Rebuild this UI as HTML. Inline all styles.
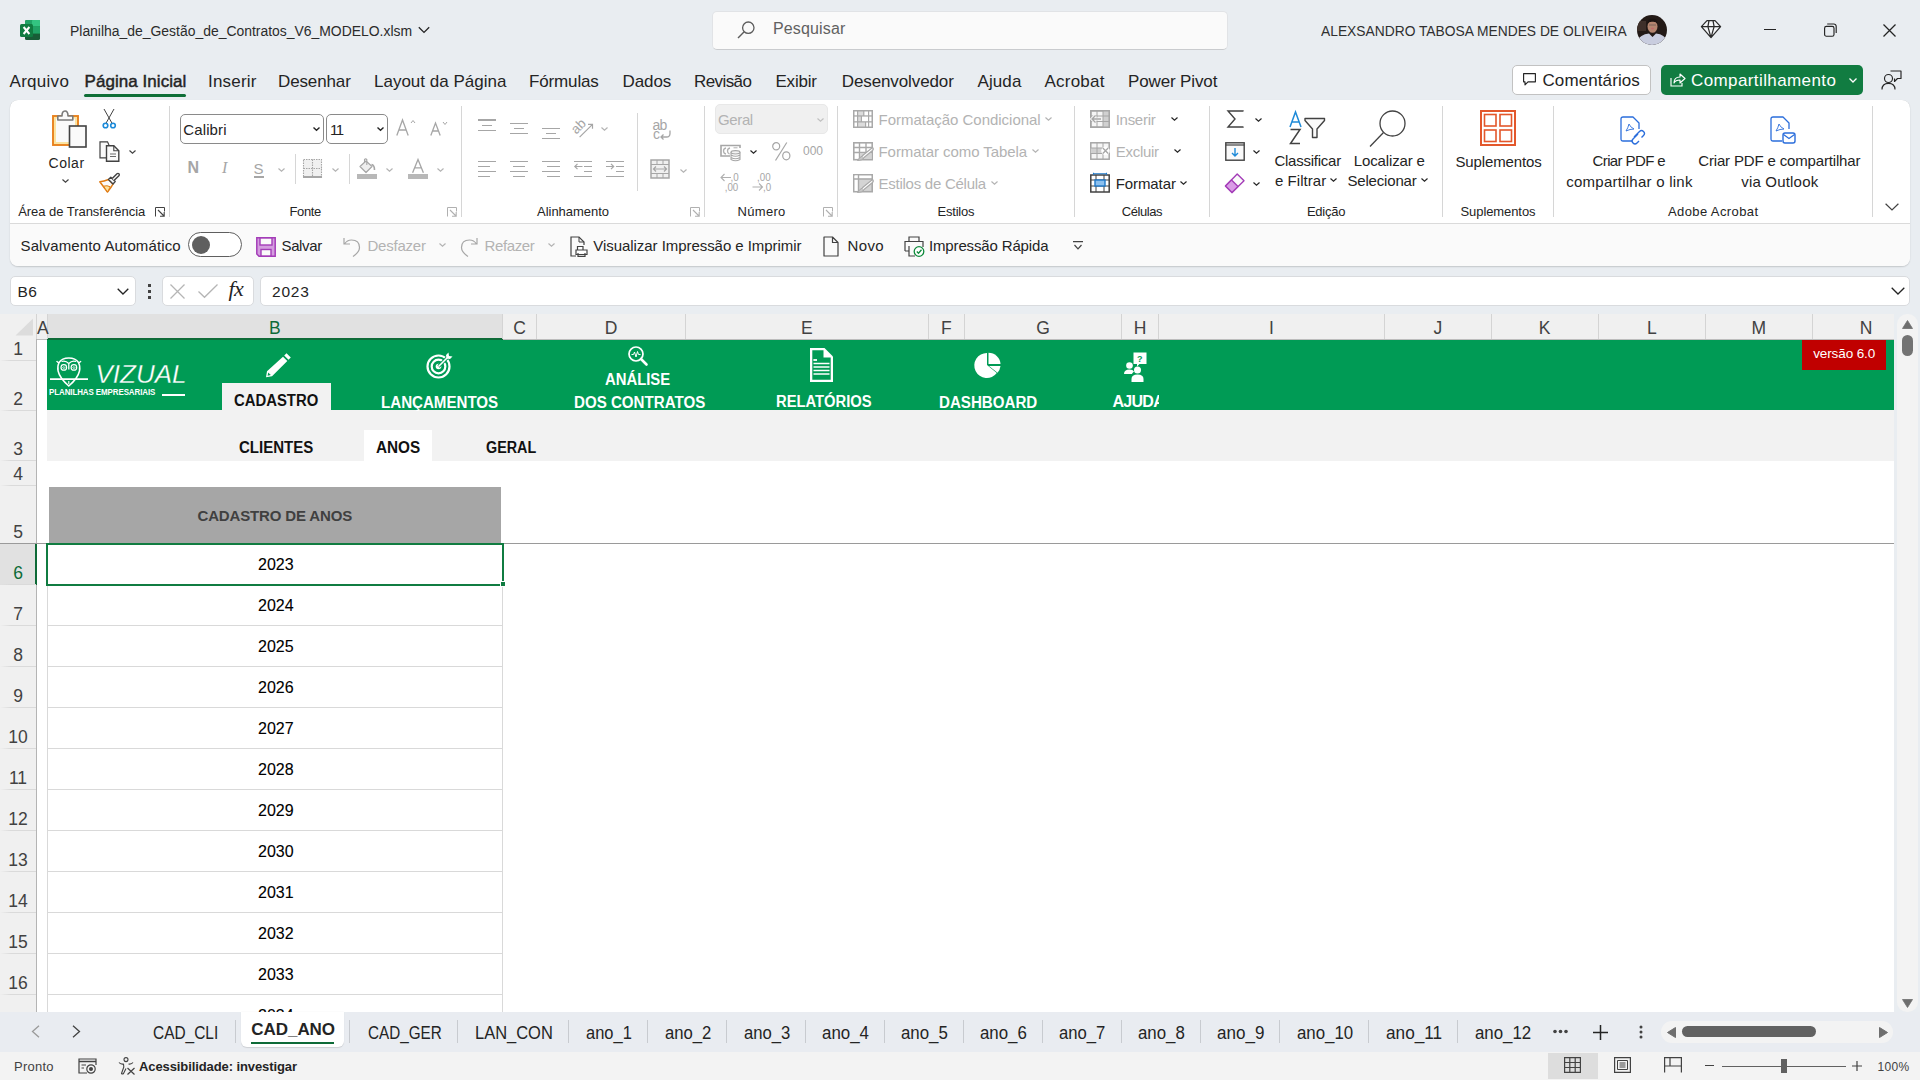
<!DOCTYPE html>
<html><head><meta charset="utf-8">
<style>
*{box-sizing:border-box;margin:0;padding:0}
html,body{width:1920px;height:1080px;overflow:hidden;background:#e9edf1;font-family:"Liberation Sans",sans-serif;color:#242424;position:relative}
.a{position:absolute}
.t{position:absolute;white-space:nowrap;line-height:1}
svg{position:absolute;overflow:visible}
.ic{fill:none;stroke:#424242;stroke-width:1}

</style></head><body>

<svg style="left:20px;top:20px" width="20" height="20" viewBox="0 0 20 20">
  <rect x="5" y="0" width="15" height="20" rx="1.5" fill="#185c37"/>
  <rect x="5" y="0" width="15" height="7" rx="1.5" fill="#21a366"/>
  <rect x="12" y="0" width="8" height="7" rx="1" fill="#33c481"/>
  <rect x="5" y="6.5" width="15" height="7" fill="#107c41"/>
  <rect x="12" y="6.5" width="8" height="7" fill="#21a366"/>
  <rect x="0" y="4" width="13" height="13" rx="1.5" fill="#107c41"/>
  <path d="M3.6 7 L9.4 14 M9.4 7 L3.6 14" stroke="#fff" stroke-width="2"/>
</svg>
<div class="t" id="t0" style="left:70.00px;top:22.96px;font-size:15.4px;color:#2b2b2b;transform:scaleX(0.9047);transform-origin:0 0;">Planilha_de_Gestão_de_Contratos_V6_MODELO.xlsm</div>
<svg style="left:418px;top:26px" width="12" height="8" viewBox="0 0 12 8"><path d="M0.8 1.2 L6 6.4 L11.2 1.2" fill="none" stroke="#242424" stroke-width="1.3"/></svg>
<div class="a" style="left:712px;top:11px;width:516px;height:39px;background:#fafafa;border:1px solid #e1e3e6;border-bottom-color:#c9cbce;border-radius:5px"></div>
<svg style="left:737px;top:21px" width="18" height="18" viewBox="0 0 18 18"><circle cx="11.3" cy="6.7" r="5.7" fill="none" stroke="#5c5c5c" stroke-width="1.3"/><path d="M7.2 10.8 L1 17" stroke="#5c5c5c" stroke-width="1.4"/></svg>
<div class="t" id="t1" style="left:773.00px;top:21.46px;font-size:16px;color:#616161;letter-spacing:0.140px;">Pesquisar</div>
<div class="t" id="t2" style="left:1321.00px;top:22.76px;font-size:15.4px;color:#303030;transform:scaleX(0.8970);transform-origin:0 0;">ALEXSANDRO TABOSA MENDES DE OLIVEIRA</div>
<svg style="left:1637px;top:15px" width="30" height="30" viewBox="0 0 30 30"><defs><clipPath id="avc"><circle cx="15" cy="15" r="15"/></clipPath></defs><g clip-path="url(#avc)"><rect width="30" height="30" fill="#231a17"/><rect x="0" y="6" width="9" height="10" fill="#3e302a"/><ellipse cx="15.5" cy="11.5" rx="5" ry="6.3" fill="#b4856f"/><path d="M10.5 9 Q10.5 3.5 15.5 3.8 Q20.5 3.5 20.5 9 Q19 6.5 15.5 6.8 Q12 6.5 10.5 9 Z" fill="#1b1412"/><path d="M12 10 H19" stroke="#6d5a55" stroke-width="0.8"/><ellipse cx="15.5" cy="13.6" rx="1.6" ry="0.8" fill="#c2686a"/><path d="M0 26 Q3 19.5 12 18.5 L15.5 22 L19 18.5 Q28 19.5 30 26 V30 H0 Z" fill="#c9cddf"/></g></svg>
<svg style="left:1701px;top:20px" width="20" height="19" viewBox="0 0 20 19"><path d="M6 0.6 H14 L19.6 6.7 L10 17.6 L0.4 6.7 Z" fill="#f4f6f8"/><path d="M6 0.6 H14 L19.6 6.7 L10 17.6 L0.4 6.7 Z M0.4 6.7 H19.6 M8 0.6 L6.9 6.7 L10 17.6 L13.1 6.7 L12 0.6" fill="none" stroke="#2b2b2b" stroke-width="1.25" stroke-linejoin="round"/></svg>
<div class="a" style="left:1764px;top:29px;width:12px;height:1.2px;background:#242424"></div>
<svg style="left:1824px;top:23px" width="13" height="14" viewBox="0 0 13 14"><rect x="0.6" y="3.4" width="9.4" height="9.8" rx="1.8" fill="none" stroke="#242424" stroke-width="1.15"/><path d="M3.2 1 H9.8 a2.4 2.4 0 0 1 2.4 2.4 V10" fill="none" stroke="#242424" stroke-width="1.15"/></svg>
<svg style="left:1883px;top:24px" width="13" height="13" viewBox="0 0 13 13"><path d="M0.5 0.5 L12.5 12.5 M12.5 0.5 L0.5 12.5" stroke="#242424" stroke-width="1.25"/></svg>

<div class="t" id="t3" style="left:9.50px;top:72.61px;font-size:17px;color:#242424;letter-spacing:0.287px;">Arquivo</div>
<div class="t" id="t4" style="left:84.50px;top:72.61px;font-size:17px;color:#242424;letter-spacing:0.057px;-webkit-text-stroke:0.45px #242424;">Página Inicial</div>
<div class="t" id="t5" style="left:208.00px;top:72.61px;font-size:17px;color:#242424;letter-spacing:0.188px;">Inserir</div>
<div class="t" id="t6" style="left:278.00px;top:72.61px;font-size:17px;color:#242424;letter-spacing:-0.123px;">Desenhar</div>
<div class="t" id="t7" style="left:374.00px;top:72.61px;font-size:17px;color:#242424;letter-spacing:0.001px;">Layout da Página</div>
<div class="t" id="t8" style="left:529.00px;top:72.61px;font-size:17px;color:#242424;letter-spacing:-0.143px;">Fórmulas</div>
<div class="t" id="t9" style="left:622.50px;top:72.61px;font-size:17px;color:#242424;letter-spacing:-0.070px;">Dados</div>
<div class="t" id="t10" style="left:694.00px;top:72.61px;font-size:17px;color:#242424;letter-spacing:-0.594px;">Revisão</div>
<div class="t" id="t11" style="left:775.50px;top:72.61px;font-size:17px;color:#242424;letter-spacing:-0.231px;">Exibir</div>
<div class="t" id="t12" style="left:841.75px;top:72.61px;font-size:17px;color:#242424;letter-spacing:-0.108px;">Desenvolvedor</div>
<div class="t" id="t13" style="left:977.50px;top:72.61px;font-size:17px;color:#242424;letter-spacing:0.094px;">Ajuda</div>
<div class="t" id="t14" style="left:1044.50px;top:72.61px;font-size:17px;color:#242424;letter-spacing:0.211px;">Acrobat</div>
<div class="t" id="t15" style="left:1128.00px;top:72.61px;font-size:17px;color:#242424;letter-spacing:-0.134px;">Power Pivot</div>
<div class="a" style="left:84px;top:94px;width:102px;height:3px;border-radius:1.5px;background:#0e6e37"></div>
<div class="a" style="left:1512px;top:65px;width:139px;height:30px;border:1px solid #c2c2c2;border-radius:5px;background:#fff"></div>
<svg style="left:1523px;top:73px" width="13" height="13" viewBox="0 0 13 13"><path d="M0.6 0.6 H12.4 V8.8 H5 L2 11.8 V8.8 H0.6 Z" fill="none" stroke="#242424" stroke-width="1.15" stroke-linejoin="round"/></svg>
<div class="a" style="left:1661px;top:65px;width:202px;height:30px;border-radius:5px;background:#117c41"></div>
<svg style="left:1670px;top:72px" width="16" height="15" viewBox="0 0 16 15"><path d="M1 6 V14 H12 V11" fill="none" stroke="#fff" stroke-width="1.15"/><path d="M4 11 C4 6.5 6.5 5 10 5 V2 L15 6.5 L10 11 V8 C7 8 5 9 4 11 Z" fill="none" stroke="#fff" stroke-width="1.15" stroke-linejoin="round"/></svg>
<svg style="left:1849px;top:78px" width="8" height="5" viewBox="0 0 8 5"><path d="M0.5 0.5 L4 4 L7.5 0.5" fill="none" stroke="#fff" stroke-width="1.3"/></svg>
<svg style="left:1881px;top:70px" width="21" height="20" viewBox="0 0 21 20"><circle cx="7.5" cy="8.5" r="4" fill="none" stroke="#242424" stroke-width="1.15"/><path d="M1 19.5 C1 14.5 4 13.3 7.5 13.3 C11 13.3 14 14.5 14 19.5" fill="none" stroke="#242424" stroke-width="1.15"/><path d="M9.5 1 H20 V8.5 H16.5 L13.5 11.5 V8.5" fill="none" stroke="#242424" stroke-width="1.15" stroke-linejoin="round"/></svg>

<div class="t" id="t16" style="left:1542.50px;top:72.21px;font-size:17px;color:#242424;letter-spacing:0.098px;">Comentários</div>
<div class="t" id="t17" style="left:1691.00px;top:72.21px;font-size:17px;color:#ffffff;letter-spacing:0.397px;">Compartilhamento</div>
<div class="a" style="left:10px;top:100px;width:1900px;height:166px;border-radius:8px;background:#fff;box-shadow:0 1px 1.5px rgba(0,0,0,0.16),0 0 0.5px rgba(0,0,0,0.2);overflow:hidden">
  <div class="a" style="left:0;top:123px;width:1900px;height:43px;background:#fafafa;border-top:1px solid #dadada"></div>
</div>
<div class="a" style="left:169.0px;top:106px;width:1px;height:111px;background:#d6d6d6"></div>
<div class="a" style="left:461.0px;top:106px;width:1px;height:111px;background:#d6d6d6"></div>
<div class="a" style="left:704.0px;top:106px;width:1px;height:111px;background:#d6d6d6"></div>
<div class="a" style="left:837.0px;top:106px;width:1px;height:111px;background:#d6d6d6"></div>
<div class="a" style="left:1074.0px;top:106px;width:1px;height:111px;background:#d6d6d6"></div>
<div class="a" style="left:1209.0px;top:106px;width:1px;height:111px;background:#d6d6d6"></div>
<div class="a" style="left:1442.0px;top:106px;width:1px;height:111px;background:#d6d6d6"></div>
<div class="a" style="left:1553.0px;top:106px;width:1px;height:111px;background:#d6d6d6"></div>
<div class="a" style="left:1872.0px;top:106px;width:1px;height:111px;background:#d6d6d6"></div>
<div class="t" id="t18" style="left:18.20px;top:205.30px;font-size:13px;color:#242424;letter-spacing:-0.043px;">Área de Transferência</div>
<div class="t" id="t19" style="left:289.50px;top:205.30px;font-size:13px;color:#242424;letter-spacing:-0.353px;">Fonte</div>
<div class="t" id="t20" style="left:537.00px;top:205.30px;font-size:13px;color:#242424;letter-spacing:-0.024px;">Alinhamento</div>
<div class="t" id="t21" style="left:737.60px;top:205.30px;font-size:13px;color:#242424;letter-spacing:0.298px;">Número</div>
<div class="t" id="t22" style="left:937.50px;top:205.30px;font-size:13px;color:#242424;letter-spacing:-0.209px;">Estilos</div>
<div class="t" id="t23" style="left:1121.70px;top:205.30px;font-size:13px;color:#242424;letter-spacing:-0.420px;">Células</div>
<div class="t" id="t24" style="left:1306.90px;top:205.30px;font-size:13px;color:#242424;letter-spacing:-0.242px;">Edição</div>
<div class="t" id="t25" style="left:1460.50px;top:205.30px;font-size:13px;color:#242424;letter-spacing:-0.085px;">Suplementos</div>
<div class="t" id="t26" style="left:1668.00px;top:205.30px;font-size:13px;color:#242424;letter-spacing:0.395px;">Adobe Acrobat</div>
<svg style="left:155px;top:207px" width="10" height="10" viewBox="0 0 10 10"><path d="M0.5 9.5 V0.5 H9.5 V4.5" fill="none" stroke="#424242" stroke-width="1"/><path d="M3 3 L9 9 M9.2 5 V9.2 H5" fill="none" stroke="#424242" stroke-width="1.1"/></svg>
<svg style="left:447px;top:207px" width="10" height="10" viewBox="0 0 10 10"><path d="M0.5 9.5 V0.5 H9.5 V4.5" fill="none" stroke="#b0b0b0" stroke-width="1"/><path d="M3 3 L9 9 M9.2 5 V9.2 H5" fill="none" stroke="#b0b0b0" stroke-width="1.1"/></svg>
<svg style="left:690px;top:207px" width="10" height="10" viewBox="0 0 10 10"><path d="M0.5 9.5 V0.5 H9.5 V4.5" fill="none" stroke="#b0b0b0" stroke-width="1"/><path d="M3 3 L9 9 M9.2 5 V9.2 H5" fill="none" stroke="#b0b0b0" stroke-width="1.1"/></svg>
<svg style="left:823px;top:207px" width="10" height="10" viewBox="0 0 10 10"><path d="M0.5 9.5 V0.5 H9.5 V4.5" fill="none" stroke="#b0b0b0" stroke-width="1"/><path d="M3 3 L9 9 M9.2 5 V9.2 H5" fill="none" stroke="#b0b0b0" stroke-width="1.1"/></svg>
<svg style="left:52px;top:110px" width="35" height="38" viewBox="0 0 35 38">
 <rect x="1" y="6" width="25" height="29" fill="#fbe3a0" stroke="#e8821e" stroke-width="1.9"/>
 <rect x="4" y="8.5" width="19" height="23.5" fill="#fafafa"/>
 <path d="M5.8 10 V6 H10 Q10 1 13 1 Q16 1 16 6 H20.8 V10 Z" fill="#fafafa" stroke="#7a7a7a" stroke-width="1.6" stroke-linejoin="round"/>
 <rect x="17.5" y="16" width="16.5" height="21" fill="#fafafa" stroke="#424242" stroke-width="1.6"/>
</svg>
<div class="t" id="t27" style="left:48.50px;top:155.85px;font-size:14px;color:#242424;letter-spacing:0.538px;">Colar</div>
<svg style="left:62px;top:179px" width="7" height="3.5" viewBox="0 0 7 3.5"><path d="M0.5 0.5 L3.5 3.2 L6.5 0.5" fill="none" stroke="#424242" stroke-width="1.2"/></svg>
<svg style="left:102px;top:109px" width="14" height="21" viewBox="0 0 14 21">
 <path d="M2 0 L11 16 M12 0 L3 16" stroke="#424242" stroke-width="1" fill="none"/>
 <circle cx="3.5" cy="16.5" r="2.3" fill="#fff" stroke="#1c8ad9" stroke-width="1.6"/><circle cx="11" cy="16.5" r="2.3" fill="#fff" stroke="#1c8ad9" stroke-width="1.6"/>
</svg>
<svg style="left:99px;top:141px" width="21" height="21" viewBox="0 0 21 21">
 <path d="M10 4 L8.5 0.8 H1 V16.8 H7.5" fill="#fafafa" stroke="#424242" stroke-width="1.2"/>
 <path d="M7.5 4.8 H14.8 L19.8 9.8 V20.2 H7.5 Z" fill="#fafafa" stroke="#424242" stroke-width="1.4"/>
 <path d="M14.8 4.8 V9.8 H19.8" fill="none" stroke="#424242" stroke-width="1.1"/><path d="M11 13 H17 M11 15.5 H17" fill="none" stroke="#6a6a6a" stroke-width="1"/>
</svg>
<svg style="left:129px;top:150px" width="7" height="3.5" viewBox="0 0 7 3.5"><path d="M0.5 0.5 L3.5 3.2 L6.5 0.5" fill="none" stroke="#424242" stroke-width="1.2"/></svg>
<svg style="left:99px;top:172px" width="21" height="21" viewBox="0 0 21 21">
 <path d="M0.8 9.8 Q5 9.5 9.5 7.5 L14 12 Q12 16 8.5 20 Z" fill="#fafafa" stroke="#e07a10" stroke-width="1.5" stroke-linejoin="round"/>
 <path d="M4.5 14.2 Q8 13 11.3 14.8 Q10 17 8.5 20 Z" fill="#fbe3a0" stroke="#e07a10" stroke-width="1" stroke-linejoin="round"/>
 <path d="M9.5 7.5 L11.8 5.2 L16.2 9.6 L14 12 Z" fill="#fafafa" stroke="#424242" stroke-width="1.4" stroke-linejoin="round"/>
 <path d="M13.2 6.6 L18 1.8 A1.3 1.3 0 0 1 19.9 3.7 L15 8.4" fill="#fafafa" stroke="#424242" stroke-width="1.4" stroke-linejoin="round"/>
</svg>
<div class="a" style="left:180px;top:114px;width:144px;height:30px;border:1px solid #8a8a8a;border-radius:5px;background:#fff"></div>
<div class="a" style="left:326px;top:114px;width:62px;height:30px;border:1px solid #8a8a8a;border-radius:5px;background:#fff"></div>
<div class="t" id="t28" style="left:183.30px;top:122.30px;font-size:15px;color:#242424;letter-spacing:0.114px;">Calibri</div>
<div class="t" id="t29" style="left:330.00px;top:122.30px;font-size:15px;color:#242424;letter-spacing:-1.378px;">11</div>
<svg style="left:313px;top:127px" width="7" height="3.5" viewBox="0 0 7 3.5"><path d="M0.5 0.5 L3.5 3.2 L6.5 0.5" fill="none" stroke="#242424" stroke-width="1.4"/></svg>
<svg style="left:377px;top:127px" width="7" height="3.5" viewBox="0 0 7 3.5"><path d="M0.5 0.5 L3.5 3.2 L6.5 0.5" fill="none" stroke="#242424" stroke-width="1.4"/></svg>
<svg style="left:396px;top:119px" width="20" height="17" viewBox="0 0 20 17"><path d="M0.8 16.5 L6.5 1 L12.2 16.5 M2.8 11 H10.2" fill="none" stroke="#a6a6a6" stroke-width="1.3"/><path d="M15 4 L17 1.5 L19 4" fill="none" stroke="#a6a6a6" stroke-width="1"/></svg>
<svg style="left:430px;top:121px" width="18" height="15" viewBox="0 0 18 15"><path d="M0.8 14.5 L5.5 2 L10.2 14.5 M2.6 10 H8.4" fill="none" stroke="#a6a6a6" stroke-width="1.3"/><path d="M13 1 L15 3.5 L17 1" fill="none" stroke="#a6a6a6" stroke-width="1"/></svg>
<div class="t" id="t30" style="left:187.50px;top:160.46px;font-size:16px;color:#a6a6a6;font-weight:bold;">N</div>
<div class="t" id="t31" style="left:222.00px;top:160.46px;font-size:16px;color:#a6a6a6;font-style:italic;font-family:'Liberation Serif',serif;">I</div>
<div class="t" id="t32" style="left:253.50px;top:161.30px;font-size:15px;color:#a6a6a6;">S</div>
<div class="a" style="left:254px;top:176px;width:10px;height:1.5px;background:#a6a6a6"></div>
<svg style="left:278px;top:168px" width="7" height="3.5" viewBox="0 0 7 3.5"><path d="M0.5 0.5 L3.5 3.2 L6.5 0.5" fill="none" stroke="#b3b3b3" stroke-width="1.2"/></svg>
<div class="a" style="left:295px;top:154px;width:1px;height:30px;background:#d6d6d6"></div>
<svg style="left:303px;top:159px" width="19" height="19" viewBox="0 0 19 19"><rect x="0.5" y="0.5" width="18" height="18" fill="#f0f0f0"/><path d="M0.5 0.5 H18.5 V18.5 H0.5 Z M9.5 0.5 V18.5 M0.5 9.5 H18.5" fill="none" stroke="#a6a6a6" stroke-width="1.1" stroke-dasharray="1.5 1"/><path d="M0 18 H19" stroke="#a6a6a6" stroke-width="2"/></svg>
<svg style="left:332px;top:168px" width="7" height="3.5" viewBox="0 0 7 3.5"><path d="M0.5 0.5 L3.5 3.2 L6.5 0.5" fill="none" stroke="#b3b3b3" stroke-width="1.2"/></svg>
<div class="a" style="left:349px;top:154px;width:1px;height:30px;background:#d6d6d6"></div>
<svg style="left:357px;top:158px" width="21" height="21" viewBox="0 0 21 21"><path d="M3 8.5 L9 3 L15 8.5 L9 14.5 Z" fill="#eeeeee" stroke="#a6a6a6" stroke-width="1.2" stroke-linejoin="round"/><path d="M7.5 4.5 V1.5 Q8.5 0.2 9.8 1.5 V7" fill="none" stroke="#a6a6a6" stroke-width="1.1"/><path d="M14.5 6.5 Q17.5 7 17.5 12" fill="none" stroke="#a6a6a6" stroke-width="1.6"/><rect x="0" y="16" width="20" height="5" fill="#b8b8b8"/></svg>
<svg style="left:386px;top:168px" width="7" height="3.5" viewBox="0 0 7 3.5"><path d="M0.5 0.5 L3.5 3.2 L6.5 0.5" fill="none" stroke="#b3b3b3" stroke-width="1.2"/></svg>
<svg style="left:412px;top:159px" width="12" height="14" viewBox="0 0 12 14"><path d="M0.6 13.8 L6 0.5 L11.4 13.8 M2.6 8.8 H9.4" fill="none" stroke="#a6a6a6" stroke-width="1.3"/></svg>
<div class="a" style="left:408px;top:174px;width:20px;height:5px;background:#b8b8b8"></div>
<svg style="left:437px;top:168px" width="7" height="3.5" viewBox="0 0 7 3.5"><path d="M0.5 0.5 L3.5 3.2 L6.5 0.5" fill="none" stroke="#b3b3b3" stroke-width="1.2"/></svg>
<div class="a" style="left:478px;top:119px;width:18px;height:1.8px;background:#a6a6a6"></div><div class="a" style="left:482px;top:124.5px;width:10px;height:1.8px;background:#a6a6a6"></div><div class="a" style="left:478px;top:129.5px;width:18px;height:1.8px;background:#a6a6a6"></div>
<div class="a" style="left:510px;top:122.5px;width:18px;height:1.8px;background:#a6a6a6"></div><div class="a" style="left:514px;top:127.5px;width:10px;height:1.8px;background:#a6a6a6"></div><div class="a" style="left:510px;top:132.5px;width:18px;height:1.8px;background:#a6a6a6"></div>
<div class="a" style="left:542px;top:127.5px;width:18px;height:1.8px;background:#a6a6a6"></div><div class="a" style="left:546px;top:132.5px;width:10px;height:1.8px;background:#a6a6a6"></div><div class="a" style="left:542px;top:137.5px;width:18px;height:1.8px;background:#a6a6a6"></div>
<svg style="left:565px;top:110px" width="30" height="30" viewBox="0 0 30 30"><text transform="translate(11.3 24.8) rotate(-45)" font-family="Liberation Sans" font-size="13.5" fill="#a6a6a6">ab</text><path d="M14.6 27.2 L27.5 14.3 M23 14.3 H27.5 V18.8" fill="none" stroke="#a6a6a6" stroke-width="1.2"/></svg>
<svg style="left:601px;top:127px" width="7" height="3.5" viewBox="0 0 7 3.5"><path d="M0.5 0.5 L3.5 3.2 L6.5 0.5" fill="none" stroke="#b3b3b3" stroke-width="1.2"/></svg>
<div class="a" style="left:478px;top:160.5px;width:18px;height:1.8px;background:#a6a6a6"></div><div class="a" style="left:478px;top:165.5px;width:12px;height:1.8px;background:#a6a6a6"></div><div class="a" style="left:478px;top:170.5px;width:18px;height:1.8px;background:#a6a6a6"></div><div class="a" style="left:478px;top:175.5px;width:12px;height:1.8px;background:#a6a6a6"></div>
<div class="a" style="left:510px;top:160.5px;width:18px;height:1.8px;background:#a6a6a6"></div><div class="a" style="left:513px;top:165.5px;width:12px;height:1.8px;background:#a6a6a6"></div><div class="a" style="left:510px;top:170.5px;width:18px;height:1.8px;background:#a6a6a6"></div><div class="a" style="left:513px;top:175.5px;width:12px;height:1.8px;background:#a6a6a6"></div>
<div class="a" style="left:542px;top:160.5px;width:18px;height:1.8px;background:#a6a6a6"></div><div class="a" style="left:547px;top:165.5px;width:13px;height:1.8px;background:#a6a6a6"></div><div class="a" style="left:542px;top:170.5px;width:18px;height:1.8px;background:#a6a6a6"></div><div class="a" style="left:547px;top:175.5px;width:13px;height:1.8px;background:#a6a6a6"></div>
<div class="a" style="left:574px;top:160.5px;width:18px;height:1.8px;background:#a6a6a6"></div><div class="a" style="left:584px;top:170.5px;width:8px;height:1.8px;background:#a6a6a6"></div><div class="a" style="left:574px;top:175.5px;width:18px;height:1.8px;background:#a6a6a6"></div><svg style="left:574px;top:163px" width="9" height="7" viewBox="0 0 9 7"><path d="M8.5 3.5 H1 M3.5 0.8 L0.8 3.5 L3.5 6.2" fill="none" stroke="#a6a6a6" stroke-width="1.2"/></svg><div class="a" style="left:584px;top:165.5px;width:8px;height:1.8px;background:#a6a6a6"></div>
<div class="a" style="left:606px;top:160.5px;width:18px;height:1.8px;background:#a6a6a6"></div><div class="a" style="left:616px;top:170.5px;width:8px;height:1.8px;background:#a6a6a6"></div><div class="a" style="left:606px;top:175.5px;width:18px;height:1.8px;background:#a6a6a6"></div><svg style="left:606px;top:163px" width="9" height="7" viewBox="0 0 9 7"><path d="M0 3.5 H7.5 M5 0.8 L7.7 3.5 L5 6.2" fill="none" stroke="#a6a6a6" stroke-width="1.2"/></svg><div class="a" style="left:616px;top:165.5px;width:8px;height:1.8px;background:#a6a6a6"></div>
<div class="a" style="left:637px;top:113px;width:1px;height:78px;background:#d6d6d6"></div>
<div class="t" id="t33" style="left:652.50px;top:117.65px;font-size:14px;color:#a6a6a6;letter-spacing:-0.8px;">ab</div>
<svg style="left:652.5px;top:129px" width="18" height="12" viewBox="0 0 18 12"><text x="0" y="10" font-family="Liberation Sans" font-size="14" fill="#a6a6a6">c</text><path d="M10.5 5.5 L8 8 L10.5 10.5 M8.2 8 H13.5 Q17 8 17 4.5 V1.5" fill="none" stroke="#a6a6a6" stroke-width="1.3"/></svg>
<svg style="left:650px;top:159px" width="20" height="20" viewBox="0 0 20 20"><rect x="1" y="1" width="18" height="18" fill="#f0f0f0" stroke="#a6a6a6" stroke-width="1.5"/><path d="M1 5.5 H19 M1 14.5 H19 M7 1 V5.5 M13 1 V5.5 M7 14.5 V19 M13 14.5 V19" stroke="#a6a6a6" stroke-width="1"/><path d="M3.5 10 H16.5 M6 7.5 L3.5 10 L6 12.5 M14 7.5 L16.5 10 L14 12.5" fill="none" stroke="#a6a6a6" stroke-width="1.2"/></svg>
<svg style="left:680px;top:169px" width="7" height="3.5" viewBox="0 0 7 3.5"><path d="M0.5 0.5 L3.5 3.2 L6.5 0.5" fill="none" stroke="#b3b3b3" stroke-width="1.2"/></svg>
<div class="a" style="left:715px;top:104px;width:113px;height:30px;border-radius:5px;background:#f0f0f0;border:1px solid #e8e8e8"></div>
<div class="t" id="t34" style="left:718.00px;top:112.30px;font-size:15px;color:#b3b3b3;letter-spacing:-0.372px;">Geral</div>
<svg style="left:817px;top:118px" width="7" height="3.5" viewBox="0 0 7 3.5"><path d="M0.5 0.5 L3.5 3.2 L6.5 0.5" fill="none" stroke="#c0c0c0" stroke-width="1.2"/></svg>
<svg style="left:720px;top:144px" width="22" height="18" viewBox="0 0 22 18">
<path d="M10 12 H1 V1.5 H20 V4" fill="none" stroke="#a6a6a6" stroke-width="1.6"/>
<path d="M6 4 Q3.5 4.5 3.5 7 Q3.5 9.5 6 10 M10 4 Q7.5 4.5 7.5 7 Q7.5 9.5 9.5 10" fill="none" stroke="#b0b0b0" stroke-width="1.3"/>
<path d="M13.5 3.8 H17.5" stroke="#b0b0b0" stroke-width="1"/>
<ellipse cx="15.5" cy="8.3" rx="4.5" ry="1.7" fill="#f3f3f3" stroke="#a6a6a6" stroke-width="1.1"/>
<path d="M11 8.3 V15.5 Q15.5 18 20 15.5 V8.3 M11 11 Q15.5 13.5 20 11 M11 13.5 Q15.5 16 20 13.5" fill="none" stroke="#a6a6a6" stroke-width="1.1"/>
</svg>
<svg style="left:750px;top:150px" width="7" height="3.5" viewBox="0 0 7 3.5"><path d="M0.5 0.5 L3.5 3.2 L6.5 0.5" fill="none" stroke="#242424" stroke-width="1.2"/></svg>
<svg style="left:772px;top:142px" width="19" height="19" viewBox="0 0 19 19"><ellipse cx="4.2" cy="4.3" rx="3.5" ry="3.6" fill="none" stroke="#a6a6a6" stroke-width="1.2"/><ellipse cx="14.3" cy="13.8" rx="3.6" ry="4" fill="none" stroke="#a6a6a6" stroke-width="1.2"/><path d="M14.8 0.5 L3.5 18.5" stroke="#a6a6a6" stroke-width="1.2"/></svg>
<div class="t" id="t35" style="left:803.00px;top:145.34px;font-size:12px;color:#a6a6a6;letter-spacing:-0.036px;">000</div>
<svg style="left:720px;top:172px" width="22" height="20" viewBox="0 0 22 20"><text x="12.5" y="9" font-family="Liberation Sans" font-size="11.5" fill="#a6a6a6" transform="scale(0.85 1)" >,0</text><text x="5.5" y="19" font-family="Liberation Sans" font-size="11.5" fill="#a6a6a6" transform="scale(0.85 1)">,00</text><path d="M11 5.5 H1 M4.5 2 L1 5.5 L4.5 9" fill="none" stroke="#b0b0b0" stroke-width="1.1"/></svg>
<svg style="left:752px;top:172px" width="22" height="20" viewBox="0 0 22 20"><text x="6" y="9" font-family="Liberation Sans" font-size="11.5" fill="#a6a6a6" transform="scale(0.85 1)" >,00</text><text x="13" y="19" font-family="Liberation Sans" font-size="11.5" fill="#a6a6a6" transform="scale(0.85 1)">,0</text><path d="M0.5 15 H10.5 M7 11.5 L10.5 15 L7 18.5" fill="none" stroke="#b0b0b0" stroke-width="1.1"/></svg>
<svg style="left:853px;top:110px" width="20" height="18" viewBox="0 0 20 18"><rect x="0" y="0" width="20" height="18" fill="#a9a9a9"/>
<rect x="1.5" y="1.5" width="2.5" height="3.8" fill="#fff"/><rect x="5.2" y="1.5" width="5" height="3.8" fill="#dcdcdc"/><rect x="11.4" y="1.5" width="3.6" height="3.8" fill="#fff"/><rect x="16.2" y="1.5" width="2.3" height="3.8" fill="#fff"/>
<rect x="1.5" y="6.6" width="2.5" height="4.6" fill="#fff"/><rect x="5.2" y="6.6" width="2.6" height="4.6" fill="#dcdcdc"/><rect x="9" y="6.6" width="6" height="4.6" fill="#fff"/><rect x="16.2" y="6.6" width="2.3" height="4.6" fill="#fff"/>
<rect x="1.5" y="12.5" width="2.5" height="4" fill="#fff"/><rect x="5.2" y="12.5" width="6.8" height="4" fill="#dcdcdc"/><rect x="13.2" y="12.5" width="1.8" height="4" fill="#fff"/><rect x="16.2" y="12.5" width="2.3" height="4" fill="#fff"/></svg>
<svg style="left:853px;top:142px" width="21" height="19" viewBox="0 0 21 19"><rect x="0.8" y="0.8" width="18.4" height="16.9" fill="#fff" stroke="#a9a9a9" stroke-width="1.6"/><path d="M0.8 5.5 H19.2 M0.8 10.5 H19.2 M6.5 0.8 V17.7 M13 0.8 V17.7" stroke="#a9a9a9" stroke-width="1.4"/><rect x="7" y="11" width="11.5" height="6" fill="#d4d4d4"/>
<path d="M19.5 5.5 Q21 7 19.5 8.5 L11 15.5 Q9 16.5 8.5 15 Q10 13 11.5 12 Z" fill="#fff" stroke="#a9a9a9" stroke-width="1.2"/><path d="M9.5 14 Q6.5 15 4.5 18.5 Q9 18.5 11 16" fill="#c8c8c8" stroke="#a9a9a9" stroke-width="1"/></svg>
<svg style="left:853px;top:174px" width="21" height="19" viewBox="0 0 21 19"><rect x="0.8" y="0.8" width="18.4" height="16.9" fill="#d4d4d4" stroke="#a9a9a9" stroke-width="1.6"/><rect x="1.6" y="1.6" width="16.8" height="3" fill="#fff"/><rect x="1.6" y="1.6" width="3.5" height="15.3" fill="#fff"/><path d="M0.8 5 H19.2 M5.5 0.8 V17.7" stroke="#a9a9a9" stroke-width="1.4"/>
<path d="M19.5 5.5 Q21 7 19.5 8.5 L11 15.5 Q9 16.5 8.5 15 Q10 13 11.5 12 Z" fill="#fff" stroke="#a9a9a9" stroke-width="1.2"/><path d="M9.5 14 Q6.5 15 4.5 18.5 Q9 18.5 11 16" fill="#c8c8c8" stroke="#a9a9a9" stroke-width="1"/></svg>
<div class="t" id="t36" style="left:878.50px;top:112.30px;font-size:15px;color:#b3b3b3;letter-spacing:-0.019px;">Formatação Condicional</div>
<div class="t" id="t37" style="left:878.50px;top:144.30px;font-size:15px;color:#b3b3b3;letter-spacing:-0.058px;">Formatar como Tabela</div>
<div class="t" id="t38" style="left:878.50px;top:176.30px;font-size:15px;color:#b3b3b3;letter-spacing:-0.252px;">Estilos de Célula</div>
<svg style="left:1045px;top:117px" width="7" height="3.5" viewBox="0 0 7 3.5"><path d="M0.5 0.5 L3.5 3.2 L6.5 0.5" fill="none" stroke="#b3b3b3" stroke-width="1.2"/></svg>
<svg style="left:1032px;top:149px" width="7" height="3.5" viewBox="0 0 7 3.5"><path d="M0.5 0.5 L3.5 3.2 L6.5 0.5" fill="none" stroke="#b3b3b3" stroke-width="1.2"/></svg>
<svg style="left:991px;top:181px" width="7" height="3.5" viewBox="0 0 7 3.5"><path d="M0.5 0.5 L3.5 3.2 L6.5 0.5" fill="none" stroke="#b3b3b3" stroke-width="1.2"/></svg>
<svg style="left:1090px;top:110px" width="20" height="18" viewBox="0 0 20 18"><rect x="0.8" y="0.8" width="18.4" height="16.4" fill="#f5f5f5" stroke="#a6a6a6" stroke-width="1.5"/><rect x="13" y="0.8" width="6.2" height="16.4" fill="#d0d0d0"/><path d="M0.8 6 H19.2 M0.8 11.5 H19.2 M7 0.8 V17.2 M13 0.8 V17.2" stroke="#a6a6a6" stroke-width="1"/><rect x="0.8" y="0.8" width="18.4" height="16.4" fill="none" stroke="#a6a6a6" stroke-width="1.5"/><path d="M11 9 H2 M5.5 5.5 L2 9 L5.5 12.5" fill="none" stroke="#f5f5f5" stroke-width="3.2"/><path d="M11 9 H2 M5.5 5.5 L2 9 L5.5 12.5" fill="none" stroke="#a6a6a6" stroke-width="1.3"/></svg>
<svg style="left:1090px;top:142px" width="20" height="18" viewBox="0 0 20 18"><rect x="0.8" y="0.8" width="18.4" height="16.4" fill="#f5f5f5" stroke="#a6a6a6" stroke-width="1.5"/><rect x="0.8" y="6" width="12" height="5.5" fill="#d0d0d0"/><path d="M0.8 6 H19.2 M0.8 11.5 H19.2 M7 0.8 V17.2 M13 0.8 V17.2" stroke="#a6a6a6" stroke-width="1"/><circle cx="15.5" cy="8.8" r="4.3" fill="#fff"/><path d="M12.8 6 L18.2 11.5 M18.2 6 L12.8 11.5" stroke="#a6a6a6" stroke-width="1.3"/></svg>
<svg style="left:1090px;top:172px" width="20" height="21" viewBox="0 0 20 21"><rect x="0.8" y="3" width="18.4" height="17" fill="#fff" stroke="#424242" stroke-width="1.5"/><path d="M0.8 8 H19.2 M0.8 14 H19.2 M6 3 V20 M14 3 V20" stroke="#424242" stroke-width="1"/><rect x="5" y="8" width="10" height="6" fill="#8cc0ee" stroke="#1e78c8" stroke-width="1.4"/><path d="M3.5 0.8 V2.8 M16.5 0.8 V2.8 M3.5 1.8 H16.5" stroke="#1e78c8" stroke-width="1.1"/></svg>
<div class="t" id="t39" style="left:1115.70px;top:112.30px;font-size:15px;color:#b3b3b3;letter-spacing:-0.281px;">Inserir</div>
<div class="t" id="t40" style="left:1115.70px;top:144.30px;font-size:15px;color:#b3b3b3;letter-spacing:-0.269px;">Excluir</div>
<div class="t" id="t41" style="left:1115.70px;top:176.30px;font-size:15px;color:#242424;letter-spacing:-0.092px;">Formatar</div>
<svg style="left:1171px;top:117px" width="7" height="3.5" viewBox="0 0 7 3.5"><path d="M0.5 0.5 L3.5 3.2 L6.5 0.5" fill="none" stroke="#242424" stroke-width="1.2"/></svg>
<svg style="left:1174px;top:149px" width="7" height="3.5" viewBox="0 0 7 3.5"><path d="M0.5 0.5 L3.5 3.2 L6.5 0.5" fill="none" stroke="#242424" stroke-width="1.2"/></svg>
<svg style="left:1180px;top:181px" width="7" height="3.5" viewBox="0 0 7 3.5"><path d="M0.5 0.5 L3.5 3.2 L6.5 0.5" fill="none" stroke="#242424" stroke-width="1.2"/></svg>
<svg style="left:1227px;top:110px" width="17" height="18" viewBox="0 0 17 18"><path d="M16 1.5 V1 H1 L8 9 L1 17 H16 V16.5" fill="none" stroke="#424242" stroke-width="1.4" stroke-linejoin="miter"/></svg>
<svg style="left:1225px;top:142px" width="20" height="19" viewBox="0 0 20 19"><rect x="0.8" y="0.8" width="18.4" height="17.4" fill="#fafafa" stroke="#424242" stroke-width="1.4"/><path d="M0.8 3 H19.2" stroke="#424242" stroke-width="1.2"/><path d="M10 6 V14 M7 11 L10 14 L13 11" fill="none" stroke="#1e8ad8" stroke-width="1.4"/></svg>
<svg style="left:1225px;top:173px" width="20" height="20" viewBox="0 0 20 20"><path d="M12.2 1 L19 7.8 L7 19.5 L0.5 13 Z" fill="#fafafa" stroke="#a43db8" stroke-width="1.4" stroke-linejoin="round"/><path d="M6.5 7 L13 13.5 L7 19.5 L0.5 13 Z" fill="#d99ce6" stroke="#a43db8" stroke-width="1.4" stroke-linejoin="round"/></svg>
<svg style="left:1255px;top:118px" width="7" height="3.5" viewBox="0 0 7 3.5"><path d="M0.5 0.5 L3.5 3.2 L6.5 0.5" fill="none" stroke="#242424" stroke-width="1.2"/></svg>
<svg style="left:1253px;top:150px" width="7" height="3.5" viewBox="0 0 7 3.5"><path d="M0.5 0.5 L3.5 3.2 L6.5 0.5" fill="none" stroke="#242424" stroke-width="1.2"/></svg>
<svg style="left:1253px;top:182px" width="7" height="3.5" viewBox="0 0 7 3.5"><path d="M0.5 0.5 L3.5 3.2 L6.5 0.5" fill="none" stroke="#242424" stroke-width="1.2"/></svg>
<svg style="left:1289px;top:111px" width="37" height="34" viewBox="0 0 37 34">
<path d="M1 16 L6.5 1 L12 16 M3 11 H10" fill="none" stroke="#1e8ad8" stroke-width="1.5"/>
<path d="M1.5 18.5 H11 L1.5 32.5 H11" fill="none" stroke="#424242" stroke-width="1.5"/>
<path d="M16 7.5 H35.5 V9.5 L28 18 V26.5 H23.5 V18 L16 9.5 Z" fill="#fafafa" stroke="#424242" stroke-width="1.4" stroke-linejoin="round"/>
</svg>
<svg style="left:1369px;top:110px" width="38" height="38" viewBox="0 0 38 38"><circle cx="23.5" cy="13.5" r="12.5" fill="none" stroke="#424242" stroke-width="1.3"/><path d="M14.5 22.5 L1 36.5" stroke="#424242" stroke-width="1.3"/></svg>
<div class="t" id="t42" style="left:1274.40px;top:152.90px;font-size:15px;color:#242424;letter-spacing:-0.239px;">Classificar</div>
<div class="t" id="t43" style="left:1275.00px;top:173.30px;font-size:15px;color:#242424;letter-spacing:0.045px;">e Filtrar</div>
<svg style="left:1330px;top:178px" width="7" height="3.5" viewBox="0 0 7 3.5"><path d="M0.5 0.5 L3.5 3.2 L6.5 0.5" fill="none" stroke="#242424" stroke-width="1.2"/></svg>
<div class="t" id="t44" style="left:1353.75px;top:152.90px;font-size:15px;color:#242424;letter-spacing:-0.135px;">Localizar e</div>
<div class="t" id="t45" style="left:1347.50px;top:173.30px;font-size:15px;color:#242424;letter-spacing:-0.188px;">Selecionar</div>
<svg style="left:1421px;top:178px" width="7" height="3.5" viewBox="0 0 7 3.5"><path d="M0.5 0.5 L3.5 3.2 L6.5 0.5" fill="none" stroke="#242424" stroke-width="1.2"/></svg>
<svg style="left:1480px;top:110px" width="36" height="36" viewBox="0 0 36 36"><rect x="1" y="1" width="34" height="34" fill="none" stroke="#e3572b" stroke-width="2"/><rect x="4.5" y="4.5" width="11.5" height="11.5" fill="none" stroke="#e3572b" stroke-width="1.6"/><rect x="20" y="4.5" width="11.5" height="11.5" fill="none" stroke="#e3572b" stroke-width="1.6"/><rect x="4.5" y="20" width="11.5" height="11.5" fill="none" stroke="#e3572b" stroke-width="1.6"/><rect x="20" y="20" width="11.5" height="11.5" fill="none" stroke="#e3572b" stroke-width="1.6"/></svg>
<div class="t" id="t46" style="left:1455.50px;top:153.55px;font-size:15px;color:#242424;letter-spacing:-0.136px;">Suplementos</div>
<svg style="left:1620px;top:116px" width="26" height="28" viewBox="0 0 26 28"><path d="M12 25 H3 Q1 25 1 23 V3 Q1 1 3 1 H13 L19 7 V13" fill="none" stroke="#2a6ddb" stroke-width="1.3" stroke-linejoin="round"/><path d="M6 15 Q8 12 9 8 Q10 11 14 13 Q10 13 6 15 Z" fill="none" stroke="#2a6ddb" stroke-width="0.9"/><path d="M14 21 L19.5 15.5 Q21.5 13.5 23.5 15.5 Q25.5 17.5 23.5 19.5 L21.5 21.5 M18 18 L13 23 Q11 25 13 27 Q15 29 17 27 L19 25" fill="none" stroke="#2a6ddb" stroke-width="1.4"/></svg>
<svg style="left:1770px;top:116px" width="26" height="28" viewBox="0 0 26 28"><path d="M12 25 H3 Q1 25 1 23 V3 Q1 1 3 1 H13 L19 7 V13" fill="none" stroke="#2a6ddb" stroke-width="1.3" stroke-linejoin="round"/><path d="M6 15 Q8 12 9 8 Q10 11 14 13 Q10 13 6 15 Z" fill="none" stroke="#2a6ddb" stroke-width="0.9"/><rect x="13" y="17" width="12" height="10" rx="2" fill="#fff" stroke="#2a6ddb" stroke-width="1.4"/><path d="M13.5 18.5 L19 22.5 L24.5 18.5" fill="none" stroke="#2a6ddb" stroke-width="1.2"/></svg>
<div class="t" id="t47" style="left:1592.50px;top:153.30px;font-size:15px;color:#242424;letter-spacing:-0.599px;">Criar PDF e</div>
<div class="t" id="t48" style="left:1566.25px;top:173.55px;font-size:15px;color:#242424;letter-spacing:0.249px;">compartilhar o link</div>
<div class="t" id="t49" style="left:1698.25px;top:153.30px;font-size:15px;color:#242424;letter-spacing:-0.160px;">Criar PDF e compartilhar</div>
<div class="t" id="t50" style="left:1741.25px;top:173.55px;font-size:15px;color:#242424;letter-spacing:0.190px;">via Outlook</div>
<svg style="left:1885px;top:203px" width="14" height="8" viewBox="0 0 14 8"><path d="M0.6 0.8 L7 7 L13.4 0.8" fill="none" stroke="#424242" stroke-width="1.2"/></svg>
<div class="t" id="t51" style="left:20.50px;top:238.30px;font-size:15px;color:#242424;letter-spacing:0.130px;">Salvamento Automático</div>
<div class="a" style="left:188px;top:232px;width:54px;height:25px;border-radius:13px;border:1px solid #5f5f5f;background:#fff"></div>
<div class="a" style="left:192px;top:235.5px;width:18px;height:18px;border-radius:50%;background:#5f5f5f"></div>
<svg style="left:256px;top:237px" width="20" height="20" viewBox="0 0 20 20"><path d="M0.8 0.8 H19.2 V19.2 H3 L0.8 17 Z" fill="#d49ddf" stroke="#a43db8" stroke-width="1.5"/><rect x="4" y="1" width="12" height="7" fill="#fafafa" stroke="#a43db8" stroke-width="1.4"/><rect x="5" y="12.5" width="10" height="6.5" fill="#fafafa" stroke="#a43db8" stroke-width="1.4"/></svg>
<div class="t" id="t52" style="left:281.50px;top:238.30px;font-size:15px;color:#242424;letter-spacing:-0.366px;">Salvar</div>
<svg style="left:343px;top:237px" width="18" height="20" viewBox="0 0 18 20"><path d="M1 1 V7 H7 M1.5 7 Q4 3 8.5 3 Q16.5 3 16.5 10.5 Q16.5 15 10 19.5" fill="none" stroke="#a6a6a6" stroke-width="1.2"/></svg>
<div class="t" id="t53" style="left:367.50px;top:238.30px;font-size:15px;color:#b3b3b3;letter-spacing:-0.219px;">Desfazer</div>
<svg style="left:439px;top:243px" width="7" height="3.5" viewBox="0 0 7 3.5"><path d="M0.5 0.5 L3.5 3.2 L6.5 0.5" fill="none" stroke="#b3b3b3" stroke-width="1.2"/></svg>
<svg style="left:460px;top:237px" width="18" height="20" viewBox="0 0 18 20"><path d="M17 1 V7 H11 M16.5 7 Q14 3 9.5 3 Q1.5 3 1.5 10.5 Q1.5 15 8 19.5" fill="none" stroke="#a6a6a6" stroke-width="1.2"/></svg>
<div class="t" id="t54" style="left:484.60px;top:238.30px;font-size:15px;color:#b3b3b3;letter-spacing:-0.389px;">Refazer</div>
<svg style="left:547.7px;top:243px" width="7" height="3.5" viewBox="0 0 7 3.5"><path d="M0.5 0.5 L3.5 3.2 L6.5 0.5" fill="none" stroke="#b3b3b3" stroke-width="1.2"/></svg>
<svg style="left:570px;top:236px" width="18" height="21" viewBox="0 0 18 21"><path d="M6 20 H1 V1 H9 L14 6 V9" fill="none" stroke="#424242" stroke-width="1.2"/><path d="M9 1 V6 H14" fill="none" stroke="#424242" stroke-width="1"/><path d="M7.5 14 V10.5 H13 V14 M6 14 H17 V18.5 H6 Z M8 17 V20.3 H15 V17" fill="#fff" stroke="#424242" stroke-width="1.2"/></svg>
<div class="t" id="t55" style="left:593.30px;top:238.30px;font-size:15px;color:#242424;letter-spacing:-0.053px;">Visualizar Impressão e Imprimir</div>
<svg style="left:823px;top:236px" width="16" height="21" viewBox="0 0 16 21"><path d="M1 1 H9.5 L15 6.5 V20 H1 Z M9.5 1 V6.5 H15" fill="none" stroke="#424242" stroke-width="1.2" stroke-linejoin="round"/></svg>
<div class="t" id="t56" style="left:847.50px;top:238.30px;font-size:15px;color:#242424;letter-spacing:0.390px;">Novo</div>
<svg style="left:904px;top:236px" width="21" height="21" viewBox="0 0 21 21"><path d="M5 5.5 V1 H15 V5.5 M1 15 V5.5 H19 V11 M5 15 H1" fill="none" stroke="#424242" stroke-width="1.2"/><path d="M5 10 V20 H11" fill="none" stroke="#424242" stroke-width="1.2"/><circle cx="15" cy="15.5" r="4.8" fill="#fff" stroke="#0f8a3c" stroke-width="1.3"/><path d="M12.8 15.5 L14.5 17.2 L17.5 13.8" fill="none" stroke="#0f8a3c" stroke-width="1.3"/></svg>
<div class="t" id="t57" style="left:929.00px;top:238.30px;font-size:15px;color:#242424;letter-spacing:-0.149px;">Impressão Rápida</div>
<svg style="left:1073px;top:241px" width="10" height="9" viewBox="0 0 10 9"><path d="M0 0.6 H10 M1.5 4 L5 7.8 L8.5 4" fill="none" stroke="#424242" stroke-width="1.2"/></svg>
<div class="a" style="left:10px;top:276px;width:126px;height:30px;background:#fff;border:1px solid #d9dbde;border-radius:5px"></div>
<svg style="left:117px;top:288px" width="12" height="7" viewBox="0 0 12 7"><path d="M0.7 0.7 L6 6 L11.3 0.7" fill="none" stroke="#242424" stroke-width="1.3"/></svg>
<div class="a" style="left:148px;top:284px;width:3px;height:3px;background:#424242"></div>
<div class="a" style="left:148px;top:290px;width:3px;height:3px;background:#424242"></div>
<div class="a" style="left:148px;top:296px;width:3px;height:3px;background:#424242"></div>
<div class="a" style="left:162px;top:276px;width:92px;height:30px;background:#fff;border:1px solid #d9dbde;border-radius:5px"></div>
<svg style="left:170px;top:283.5px" width="15" height="15" viewBox="0 0 15 15"><path d="M0.5 0.5 L14.5 14.5 M14.5 0.5 L0.5 14.5" stroke="#b5b5b5" stroke-width="1.3"/></svg>
<svg style="left:198px;top:284px" width="20" height="14" viewBox="0 0 20 14"><path d="M0.5 7.5 L6.5 13.3 L19.5 0.5" fill="none" stroke="#b5b5b5" stroke-width="1.3"/></svg>
<div class="a" style="left:260px;top:276px;width:1650px;height:30px;background:#fff;border:1px solid #d9dbde;border-radius:5px"></div>
<svg style="left:1891px;top:287px" width="14" height="8" viewBox="0 0 14 8"><path d="M0.7 0.7 L7 7 L13.3 0.7" fill="none" stroke="#242424" stroke-width="1.3"/></svg>
<div class="t" id="t58" style="left:17.50px;top:283.58px;font-size:15.5px;color:#242424;letter-spacing:0.471px;">B6</div>
<div class="t" id="t59" style="left:228.50px;top:278.38px;font-size:22px;color:#242424;font-style:italic;font-family:'Liberation Serif',serif;letter-spacing:-0.5px;">fx</div>
<div class="t" id="t60" style="left:272.00px;top:283.88px;font-size:15.5px;color:#242424;letter-spacing:0.785px;">2023</div>
<div class="a" style="left:0;top:314px;width:1894px;height:698px;background:#fff"></div>
<div class="a" style="left:0;top:314px;width:1894px;height:26px;background:#f0f0f0;border-bottom:1px solid #bdbdbd"></div>
<div class="a" style="left:47px;top:314px;width:455.5px;height:25px;background:#e1e1e1"></div>
<div class="a" style="left:47px;top:338px;width:455.5px;height:2px;background:#0e6b38"></div>
<svg style="left:14px;top:318px" width="20" height="18" viewBox="0 0 20 18"><path d="M19 0.5 V17.5 H1.5 Z" fill="#dcdcdc"/></svg>
<div class="a" style="left:46.5px;top:314px;width:1px;height:25px;background:#d4d4d4"></div>
<div class="a" style="left:502.0px;top:314px;width:1px;height:25px;background:#d4d4d4"></div>
<div class="a" style="left:536.0px;top:314px;width:1px;height:25px;background:#d4d4d4"></div>
<div class="a" style="left:685.0px;top:314px;width:1px;height:25px;background:#d4d4d4"></div>
<div class="a" style="left:927.5px;top:314px;width:1px;height:25px;background:#d4d4d4"></div>
<div class="a" style="left:964.0px;top:314px;width:1px;height:25px;background:#d4d4d4"></div>
<div class="a" style="left:1121.0px;top:314px;width:1px;height:25px;background:#d4d4d4"></div>
<div class="a" style="left:1158.0px;top:314px;width:1px;height:25px;background:#d4d4d4"></div>
<div class="a" style="left:1384.0px;top:314px;width:1px;height:25px;background:#d4d4d4"></div>
<div class="a" style="left:1490.5px;top:314px;width:1px;height:25px;background:#d4d4d4"></div>
<div class="a" style="left:1597.5px;top:314px;width:1px;height:25px;background:#d4d4d4"></div>
<div class="a" style="left:1705.0px;top:314px;width:1px;height:25px;background:#d4d4d4"></div>
<div class="a" style="left:1811.5px;top:314px;width:1px;height:25px;background:#d4d4d4"></div>
<div class="a" style="left:1919.5px;top:314px;width:1px;height:25px;background:#d4d4d4"></div>
<div class="a" style="left:36px;top:314px;width:1px;height:25px;background:#d4d4d4"></div>
<div class="t" style="left:37px;top:319.99px;width:10px;text-align:center;font-size:17.5px;color:#424242">A</div>
<div class="t" style="left:47px;top:319.99px;width:455.5px;text-align:center;font-size:17.5px;color:#0e6b38">B</div>
<div class="t" style="left:502.5px;top:319.99px;width:34.0px;text-align:center;font-size:17.5px;color:#424242">C</div>
<div class="t" style="left:536.5px;top:319.99px;width:149.0px;text-align:center;font-size:17.5px;color:#424242">D</div>
<div class="t" style="left:685.5px;top:319.99px;width:242.5px;text-align:center;font-size:17.5px;color:#424242">E</div>
<div class="t" style="left:928px;top:319.99px;width:36.5px;text-align:center;font-size:17.5px;color:#424242">F</div>
<div class="t" style="left:964.5px;top:319.99px;width:157.0px;text-align:center;font-size:17.5px;color:#424242">G</div>
<div class="t" style="left:1121.5px;top:319.99px;width:37.0px;text-align:center;font-size:17.5px;color:#424242">H</div>
<div class="t" style="left:1158.5px;top:319.99px;width:226.0px;text-align:center;font-size:17.5px;color:#424242">I</div>
<div class="t" style="left:1384.5px;top:319.99px;width:106.5px;text-align:center;font-size:17.5px;color:#424242">J</div>
<div class="t" style="left:1491px;top:319.99px;width:107px;text-align:center;font-size:17.5px;color:#424242">K</div>
<div class="t" style="left:1598px;top:319.99px;width:107.5px;text-align:center;font-size:17.5px;color:#424242">L</div>
<div class="t" style="left:1705.5px;top:319.99px;width:106.5px;text-align:center;font-size:17.5px;color:#424242">M</div>
<div class="t" style="left:1812px;top:319.99px;width:108px;text-align:center;font-size:17.5px;color:#424242">N</div>
<div class="a" style="left:0;top:338.5px;width:36.5px;height:673.5px;background:#f0f0f0;border-right:1px solid #b4b4b4"></div>
<div class="a" style="left:0;top:360.0px;width:35.5px;height:1px;background:linear-gradient(90deg,rgba(218,218,218,0),#dadada 30%)"></div>
<div class="t" style="left:0;top:341.09px;width:36px;text-align:center;font-size:17.5px;color:#424242">1</div>
<div class="a" style="left:0;top:410.0px;width:35.5px;height:1px;background:linear-gradient(90deg,rgba(218,218,218,0),#dadada 30%)"></div>
<div class="t" style="left:0;top:391.09px;width:36px;text-align:center;font-size:17.5px;color:#424242">2</div>
<div class="a" style="left:0;top:460.0px;width:35.5px;height:1px;background:linear-gradient(90deg,rgba(218,218,218,0),#dadada 30%)"></div>
<div class="t" style="left:0;top:441.09px;width:36px;text-align:center;font-size:17.5px;color:#424242">3</div>
<div class="a" style="left:0;top:485.0px;width:35.5px;height:1px;background:linear-gradient(90deg,rgba(218,218,218,0),#dadada 30%)"></div>
<div class="t" style="left:0;top:466.09px;width:36px;text-align:center;font-size:17.5px;color:#424242">4</div>
<div class="a" style="left:0;top:543.0px;width:35.5px;height:1px;background:linear-gradient(90deg,rgba(218,218,218,0),#dadada 30%)"></div>
<div class="t" style="left:0;top:524.09px;width:36px;text-align:center;font-size:17.5px;color:#424242">5</div>
<div class="a" style="left:0;top:543.5px;width:35px;height:41.0px;background:#e1e1e1"></div>
<div class="a" style="left:35px;top:543.5px;width:2px;height:41.0px;background:#0e6b38"></div>
<div class="a" style="left:0;top:584.0px;width:35.5px;height:1px;background:linear-gradient(90deg,rgba(218,218,218,0),#dadada 30%)"></div>
<div class="t" style="left:0;top:565.09px;width:36px;text-align:center;font-size:17.5px;color:#0e6b38">6</div>
<div class="a" style="left:0;top:625.0px;width:35.5px;height:1px;background:linear-gradient(90deg,rgba(218,218,218,0),#dadada 30%)"></div>
<div class="t" style="left:0;top:606.09px;width:36px;text-align:center;font-size:17.5px;color:#424242">7</div>
<div class="a" style="left:0;top:666.0px;width:35.5px;height:1px;background:linear-gradient(90deg,rgba(218,218,218,0),#dadada 30%)"></div>
<div class="t" style="left:0;top:647.09px;width:36px;text-align:center;font-size:17.5px;color:#424242">8</div>
<div class="a" style="left:0;top:707.0px;width:35.5px;height:1px;background:linear-gradient(90deg,rgba(218,218,218,0),#dadada 30%)"></div>
<div class="t" style="left:0;top:688.09px;width:36px;text-align:center;font-size:17.5px;color:#424242">9</div>
<div class="a" style="left:0;top:748.0px;width:35.5px;height:1px;background:linear-gradient(90deg,rgba(218,218,218,0),#dadada 30%)"></div>
<div class="t" style="left:0;top:729.09px;width:36px;text-align:center;font-size:17.5px;color:#424242">10</div>
<div class="a" style="left:0;top:789.0px;width:35.5px;height:1px;background:linear-gradient(90deg,rgba(218,218,218,0),#dadada 30%)"></div>
<div class="t" style="left:0;top:770.09px;width:36px;text-align:center;font-size:17.5px;color:#424242">11</div>
<div class="a" style="left:0;top:830.0px;width:35.5px;height:1px;background:linear-gradient(90deg,rgba(218,218,218,0),#dadada 30%)"></div>
<div class="t" style="left:0;top:811.09px;width:36px;text-align:center;font-size:17.5px;color:#424242">12</div>
<div class="a" style="left:0;top:871.0px;width:35.5px;height:1px;background:linear-gradient(90deg,rgba(218,218,218,0),#dadada 30%)"></div>
<div class="t" style="left:0;top:852.09px;width:36px;text-align:center;font-size:17.5px;color:#424242">13</div>
<div class="a" style="left:0;top:912.0px;width:35.5px;height:1px;background:linear-gradient(90deg,rgba(218,218,218,0),#dadada 30%)"></div>
<div class="t" style="left:0;top:893.09px;width:36px;text-align:center;font-size:17.5px;color:#424242">14</div>
<div class="a" style="left:0;top:953.0px;width:35.5px;height:1px;background:linear-gradient(90deg,rgba(218,218,218,0),#dadada 30%)"></div>
<div class="t" style="left:0;top:934.09px;width:36px;text-align:center;font-size:17.5px;color:#424242">15</div>
<div class="a" style="left:0;top:994.0px;width:35.5px;height:1px;background:linear-gradient(90deg,rgba(218,218,218,0),#dadada 30%)"></div>
<div class="t" style="left:0;top:975.09px;width:36px;text-align:center;font-size:17.5px;color:#424242">16</div>
<div class="a" style="left:0;top:1035.0px;width:35.5px;height:1px;background:linear-gradient(90deg,rgba(218,218,218,0),#dadada 30%)"></div>
<div class="t" style="left:0;top:1016.09px;width:36px;text-align:center;font-size:17.5px;color:#424242">17</div>
<div class="a" style="left:47px;top:340px;width:1847px;height:70px;background:#009b55"></div>
<div class="a" style="left:47px;top:410px;width:1847px;height:50.5px;background:#f2f2f2"></div>
<div class="a" style="left:222px;top:383px;width:109px;height:27px;background:#f2f2f2"></div>
<div class="a" style="left:364px;top:430px;width:68px;height:30.5px;background:#ffffff"></div>
<div class="a" style="left:1802px;top:340px;width:84px;height:29.5px;background:#c00000"></div>
<div class="t" id="t61" style="left:1813.20px;top:347.37px;font-size:13.5px;color:#ffffff;letter-spacing:-0.107px;">versão 6.0</div>
<div class="t" id="t62" style="left:234.00px;top:393.16px;font-size:16px;color:#111111;font-weight:bold;transform:scaleX(0.9285);transform-origin:0 0;">CADASTRO</div>
<div class="t" id="t63" style="left:381.00px;top:395.16px;font-size:16px;color:#ffffff;font-weight:bold;transform:scaleX(0.9440);transform-origin:0 0;">LANÇAMENTOS</div>
<div class="t" id="t64" style="left:604.70px;top:371.86px;font-size:16px;color:#ffffff;font-weight:bold;transform:scaleX(0.9281);transform-origin:0 0;">ANÁLISE</div>
<div class="t" id="t65" style="left:573.70px;top:394.66px;font-size:16px;color:#ffffff;font-weight:bold;transform:scaleX(0.9442);transform-origin:0 0;">DOS CONTRATOS</div>
<div class="t" id="t66" style="left:775.80px;top:393.86px;font-size:16px;color:#ffffff;font-weight:bold;transform:scaleX(0.9226);transform-origin:0 0;">RELATÓRIOS</div>
<div class="t" id="t67" style="left:939.00px;top:394.66px;font-size:16px;color:#ffffff;font-weight:bold;transform:scaleX(0.9443);transform-origin:0 0;">DASHBOARD</div>
<div class="a" style="left:1100px;top:380px;width:58.5px;height:30px;overflow:hidden"><div class="t" id="t68" style="left:12.50px;top:13.96px;font-size:16px;color:#ffffff;font-weight:bold;letter-spacing:-0.711px;">AJUDA</div></div>
<div class="t" id="t69" style="left:239.00px;top:439.66px;font-size:16px;color:#111111;font-weight:bold;transform:scaleX(0.9378);transform-origin:0 0;">CLIENTES</div>
<div class="t" id="t70" style="left:376.00px;top:439.66px;font-size:16px;color:#111111;font-weight:bold;transform:scaleX(0.9565);transform-origin:0 0;">ANOS</div>
<div class="t" id="t71" style="left:486.00px;top:439.66px;font-size:16px;color:#111111;font-weight:bold;transform:scaleX(0.8955);transform-origin:0 0;">GERAL</div>
<svg style="left:265px;top:352px" width="27" height="26" viewBox="0 0 27 26"><path d="M21.5 1.2 L25.8 5.5 L23.5 7.8 L19.2 3.5 Z M18 4.7 L22.3 9 L7 24.3 L1 25.3 L2 19.3 Z" fill="#fff"/><path d="M3.2 20.5 L5.8 23.1 L2.6 23.7 Z" fill="#009b55"/></svg>
<svg style="left:426px;top:352px" width="27" height="27" viewBox="0 0 27 27"><circle cx="12.5" cy="14.5" r="11" fill="none" stroke="#fff" stroke-width="2.2"/><circle cx="12.5" cy="14.5" r="6.8" fill="none" stroke="#fff" stroke-width="2.2"/><circle cx="12.5" cy="14.5" r="2.8" fill="#fff"/><path d="M12.5 14.5 L22 5" stroke="#009b55" stroke-width="3.2"/><path d="M12.5 14.5 L22 5" stroke="#fff" stroke-width="1.6"/><path d="M20 3 L22.5 0.5 L23 4 L26.5 4.5 L24 7 L20.5 6.5 Z" fill="#fff"/></svg>
<svg style="left:628px;top:346px" width="20" height="21" viewBox="0 0 20 21"><circle cx="8" cy="8" r="7" fill="none" stroke="#fff" stroke-width="1.7"/><path d="M3.5 8.5 H5.5 L6.5 6 L8 11 L9.5 5.5 L10.5 8.5 H12.5" fill="none" stroke="#fff" stroke-width="1"/><path d="M13 13 L18.5 18.5" stroke="#fff" stroke-width="2.6" stroke-linecap="round"/></svg>
<svg style="left:809px;top:347px" width="25" height="36" viewBox="0 0 25 36"><path d="M1 1 H15.5 L24 9.5 V35 H1 Z" fill="#fff"/><path d="M3.3 3.3 H14.5 V10.5 H21.7 V32.7 H3.3 Z" fill="#009b55"/><path d="M16.8 4.5 L20.5 8.2 H16.8 Z" fill="#fff"/><path d="M4.5 13 H8 M4.5 16.5 H20.5 M4.5 20 H20.5 M4.5 23.5 H20.5 M4.5 27 H20.5" stroke="#fff" stroke-width="1.6"/><path d="M4.5 13 H8" stroke="#fff" stroke-width="1.2"/></svg>
<svg style="left:974px;top:352px" width="27" height="26" viewBox="0 0 27 26"><path d="M13 1 A12.5 12.5 0 1 0 22.8 21 L13 13 Z" fill="#fff"/><path d="M14.5 0.8 V12 H26.5 A12 12 0 0 0 14.5 0.8 Z" fill="#fff"/><path d="M15 14 H26.5 A12.5 12.5 0 0 1 23.5 20.8 Z" fill="#fff"/></svg>
<svg style="left:1124px;top:352px" width="23" height="31" viewBox="0 0 23 31"><path d="M9.5 0.5 H22.5 V12 H15.5 L13 14.5 V12 H9.5 Z" fill="#fff"/><text x="13" y="10" font-family="Liberation Sans" font-weight="bold" font-size="9" fill="#009b55">?</text><circle cx="5.5" cy="13.5" r="3.3" fill="#fff"/><path d="M0 22 Q0 17.5 5.5 17.5 Q9 17.5 10 19.5 Q8 21 8 22 Z" fill="#fff"/><circle cx="13.5" cy="18" r="3.5" fill="#fff"/><path d="M7.5 30 V27 Q7.5 22.5 13.5 22.5 Q19.5 22.5 19.5 27 V30 Z" fill="#fff"/></svg>
<svg style="left:48px;top:355px" width="42" height="33" viewBox="0 0 42 33">
<path d="M2 24.1 H40" stroke="#fff" stroke-width="1.9"/>
<path d="M20.8 3 Q27.5 3 30.5 7.5 Q32.5 11 31.5 16 Q30 23 20.8 31 Q11.6 23 10.1 16 Q9.1 11 11.1 7.5 Q14 3 20.8 3 Z" fill="none" stroke="#fff" stroke-width="1.5"/>
<path d="M11.3 7.8 Q9.5 7.5 8.6 6 M30.3 7.8 Q32.1 7.5 33 6" fill="none" stroke="#fff" stroke-width="1.4"/>
<path d="M13.5 6.5 Q17.5 5 20.8 8.5 Q24.1 5 28.1 6.5 M20.8 8.5 V14.5" fill="none" stroke="#fff" stroke-width="1.3"/>
<circle cx="15.8" cy="12.4" r="2.8" fill="none" stroke="#fff" stroke-width="1.2"/><circle cx="25.9" cy="12.4" r="2.8" fill="none" stroke="#fff" stroke-width="1.2"/>
<ellipse cx="15.8" cy="12.6" rx="1.2" ry="0.8" fill="none" stroke="#fff" stroke-width="0.7"/><ellipse cx="25.9" cy="12.6" rx="1.2" ry="0.8" fill="none" stroke="#fff" stroke-width="0.7"/>
<path d="M20.8 26 V29" stroke="#fff" stroke-width="1.1"/>
</svg>
<div class="a" style="left:162.4px;top:393.6px;width:23px;height:2px;background:#fff"></div>
<div class="t" id="t72" style="left:95.50px;top:360.89px;font-size:26px;color:#ffffff;font-style:italic;-webkit-text-stroke:0.3px #009b55;">VIZUAL</div>
<div class="t" id="t73" style="left:48.50px;top:388.01px;font-size:9.2px;color:#ffffff;font-weight:bold;transform:scaleX(0.865);transform-origin:0 0;letter-spacing:-0.1px;">PLANILHAS EMPRESARIAIS</div>
<div class="a" style="left:48.5px;top:487px;width:452.5px;height:56.5px;background:#a6a6a6"></div>
<div class="t" id="t74" style="left:197.50px;top:508.05px;font-size:15px;color:#404040;font-weight:bold;letter-spacing:-0.150px;">CADASTRO DE ANOS</div>
<div class="a" style="left:0;top:543px;width:1894px;height:1px;background:#9a9a9a"></div>
<div class="a" style="left:47px;top:543.5px;width:1px;height:41.0px;background:#d9d9d9"></div>
<div class="a" style="left:502px;top:543.5px;width:1px;height:41.0px;background:#d9d9d9"></div>
<div class="a" style="left:47px;top:584.0px;width:456px;height:1px;background:#d9d9d9"></div>
<div class="t" id="t75" style="left:257.80px;top:556.30px;font-size:16.3px;color:#000000;transform:scaleX(0.9820);transform-origin:0 0;-webkit-text-stroke:0.1px #000;">2023</div>
<div class="a" style="left:47px;top:584.5px;width:1px;height:41.0px;background:#d9d9d9"></div>
<div class="a" style="left:502px;top:584.5px;width:1px;height:41.0px;background:#d9d9d9"></div>
<div class="a" style="left:47px;top:625.0px;width:456px;height:1px;background:#d9d9d9"></div>
<div class="t" id="t76" style="left:257.80px;top:597.30px;font-size:16.3px;color:#000000;transform:scaleX(0.9820);transform-origin:0 0;-webkit-text-stroke:0.1px #000;">2024</div>
<div class="a" style="left:47px;top:625.5px;width:1px;height:41.0px;background:#d9d9d9"></div>
<div class="a" style="left:502px;top:625.5px;width:1px;height:41.0px;background:#d9d9d9"></div>
<div class="a" style="left:47px;top:666.0px;width:456px;height:1px;background:#d9d9d9"></div>
<div class="t" id="t77" style="left:257.80px;top:638.30px;font-size:16.3px;color:#000000;transform:scaleX(0.9820);transform-origin:0 0;-webkit-text-stroke:0.1px #000;">2025</div>
<div class="a" style="left:47px;top:666.5px;width:1px;height:41.0px;background:#d9d9d9"></div>
<div class="a" style="left:502px;top:666.5px;width:1px;height:41.0px;background:#d9d9d9"></div>
<div class="a" style="left:47px;top:707.0px;width:456px;height:1px;background:#d9d9d9"></div>
<div class="t" id="t78" style="left:257.80px;top:679.30px;font-size:16.3px;color:#000000;transform:scaleX(0.9820);transform-origin:0 0;-webkit-text-stroke:0.1px #000;">2026</div>
<div class="a" style="left:47px;top:707.5px;width:1px;height:41.0px;background:#d9d9d9"></div>
<div class="a" style="left:502px;top:707.5px;width:1px;height:41.0px;background:#d9d9d9"></div>
<div class="a" style="left:47px;top:748.0px;width:456px;height:1px;background:#d9d9d9"></div>
<div class="t" id="t79" style="left:257.80px;top:720.30px;font-size:16.3px;color:#000000;transform:scaleX(0.9820);transform-origin:0 0;-webkit-text-stroke:0.1px #000;">2027</div>
<div class="a" style="left:47px;top:748.5px;width:1px;height:41.0px;background:#d9d9d9"></div>
<div class="a" style="left:502px;top:748.5px;width:1px;height:41.0px;background:#d9d9d9"></div>
<div class="a" style="left:47px;top:789.0px;width:456px;height:1px;background:#d9d9d9"></div>
<div class="t" id="t80" style="left:257.80px;top:761.30px;font-size:16.3px;color:#000000;transform:scaleX(0.9820);transform-origin:0 0;-webkit-text-stroke:0.1px #000;">2028</div>
<div class="a" style="left:47px;top:789.5px;width:1px;height:41.0px;background:#d9d9d9"></div>
<div class="a" style="left:502px;top:789.5px;width:1px;height:41.0px;background:#d9d9d9"></div>
<div class="a" style="left:47px;top:830.0px;width:456px;height:1px;background:#d9d9d9"></div>
<div class="t" id="t81" style="left:257.80px;top:802.30px;font-size:16.3px;color:#000000;transform:scaleX(0.9820);transform-origin:0 0;-webkit-text-stroke:0.1px #000;">2029</div>
<div class="a" style="left:47px;top:830.5px;width:1px;height:41.0px;background:#d9d9d9"></div>
<div class="a" style="left:502px;top:830.5px;width:1px;height:41.0px;background:#d9d9d9"></div>
<div class="a" style="left:47px;top:871.0px;width:456px;height:1px;background:#d9d9d9"></div>
<div class="t" id="t82" style="left:257.80px;top:843.30px;font-size:16.3px;color:#000000;transform:scaleX(0.9820);transform-origin:0 0;-webkit-text-stroke:0.1px #000;">2030</div>
<div class="a" style="left:47px;top:871.5px;width:1px;height:41.0px;background:#d9d9d9"></div>
<div class="a" style="left:502px;top:871.5px;width:1px;height:41.0px;background:#d9d9d9"></div>
<div class="a" style="left:47px;top:912.0px;width:456px;height:1px;background:#d9d9d9"></div>
<div class="t" id="t83" style="left:257.80px;top:884.30px;font-size:16.3px;color:#000000;transform:scaleX(0.9820);transform-origin:0 0;-webkit-text-stroke:0.1px #000;">2031</div>
<div class="a" style="left:47px;top:912.5px;width:1px;height:41.0px;background:#d9d9d9"></div>
<div class="a" style="left:502px;top:912.5px;width:1px;height:41.0px;background:#d9d9d9"></div>
<div class="a" style="left:47px;top:953.0px;width:456px;height:1px;background:#d9d9d9"></div>
<div class="t" id="t84" style="left:257.80px;top:925.30px;font-size:16.3px;color:#000000;transform:scaleX(0.9820);transform-origin:0 0;-webkit-text-stroke:0.1px #000;">2032</div>
<div class="a" style="left:47px;top:953.5px;width:1px;height:41.0px;background:#d9d9d9"></div>
<div class="a" style="left:502px;top:953.5px;width:1px;height:41.0px;background:#d9d9d9"></div>
<div class="a" style="left:47px;top:994.0px;width:456px;height:1px;background:#d9d9d9"></div>
<div class="t" id="t85" style="left:257.80px;top:966.30px;font-size:16.3px;color:#000000;transform:scaleX(0.9820);transform-origin:0 0;-webkit-text-stroke:0.1px #000;">2033</div>
<div class="a" style="left:47px;top:994.5px;width:1px;height:41.0px;background:#d9d9d9"></div>
<div class="a" style="left:502px;top:994.5px;width:1px;height:41.0px;background:#d9d9d9"></div>
<div class="a" style="left:47px;top:1035.0px;width:456px;height:1px;background:#d9d9d9"></div>
<div class="t" id="t86" style="left:257.80px;top:1007.30px;font-size:16.3px;color:#000000;transform:scaleX(0.9820);transform-origin:0 0;-webkit-text-stroke:0.1px #000;">2034</div>
<div class="a" style="left:46px;top:542.5px;width:458px;height:43px;border:2px solid #107c41"></div>
<div class="a" style="left:500px;top:580.5px;width:6px;height:6px;background:#107c41;border:1px solid #fff"></div>
<div class="a" style="left:1894px;top:314px;width:26px;height:698px;background:#e9edf1"></div>
<div class="a" style="left:1897px;top:314px;width:20.5px;height:698px;border-radius:10px;background:#f3f3f3"></div>
<svg style="left:1902px;top:320px" width="11" height="9" viewBox="0 0 11 9"><path d="M5.5 0.5 L10.5 8.5 H0.5 Z" fill="#6e6e6e" stroke="#6e6e6e" stroke-width="0.8" stroke-linejoin="round"/></svg>
<div class="a" style="left:1902px;top:335px;width:11px;height:20.5px;border-radius:5.5px;background:#737373"></div>
<svg style="left:1902px;top:999px" width="11" height="9" viewBox="0 0 11 9"><path d="M5.5 8.5 L10.5 0.5 H0.5 Z" fill="#6e6e6e" stroke="#6e6e6e" stroke-width="0.8" stroke-linejoin="round"/></svg>
<div class="a" style="left:0;top:1012px;width:240.5px;height:40px;background:#e9ecf1;border-top-right-radius:6px"></div>
<div class="a" style="left:343.5px;top:1012px;width:1576.5px;height:40px;background:#e9ecf1;border-top-left-radius:6px"></div>
<div class="a" style="left:240.5px;top:1040px;width:103px;height:12px;background:#e9ecf1"></div>
<div class="a" style="left:0;top:1052px;width:1920px;height:28px;background:#f3f3f3"></div>
<svg style="left:31px;top:1025px" width="9" height="13" viewBox="0 0 9 13"><path d="M8 0.7 L1.5 6.5 L8 12.3" fill="none" stroke="#9a9a9a" stroke-width="1.3"/></svg>
<svg style="left:72px;top:1025px" width="9" height="13" viewBox="0 0 9 13"><path d="M1 0.7 L7.5 6.5 L1 12.3" fill="none" stroke="#424242" stroke-width="1.3"/></svg>
<div class="a" style="left:240.5px;top:1012px;width:103px;height:35px;background:#fff;border-radius:0 0 6px 6px;box-shadow:0 0.5px 1px rgba(0,0,0,0.12)"></div>
<div class="a" style="left:251px;top:1042px;width:83px;height:2px;background:#0e6b38"></div>
<div class="a" style="left:235.0px;top:1020px;width:1px;height:23px;background:#c8cbd0"></div>
<div class="a" style="left:348.5px;top:1020px;width:1px;height:23px;background:#c8cbd0"></div>
<div class="a" style="left:456.5px;top:1020px;width:1px;height:23px;background:#c8cbd0"></div>
<div class="a" style="left:567.5px;top:1020px;width:1px;height:23px;background:#c8cbd0"></div>
<div class="a" style="left:647.0px;top:1020px;width:1px;height:23px;background:#c8cbd0"></div>
<div class="a" style="left:726.0px;top:1020px;width:1px;height:23px;background:#c8cbd0"></div>
<div class="a" style="left:805.0px;top:1020px;width:1px;height:23px;background:#c8cbd0"></div>
<div class="a" style="left:884.0px;top:1020px;width:1px;height:23px;background:#c8cbd0"></div>
<div class="a" style="left:963.0px;top:1020px;width:1px;height:23px;background:#c8cbd0"></div>
<div class="a" style="left:1042.0px;top:1020px;width:1px;height:23px;background:#c8cbd0"></div>
<div class="a" style="left:1121.0px;top:1020px;width:1px;height:23px;background:#c8cbd0"></div>
<div class="a" style="left:1200.0px;top:1020px;width:1px;height:23px;background:#c8cbd0"></div>
<div class="a" style="left:1279.2px;top:1020px;width:1px;height:23px;background:#c8cbd0"></div>
<div class="a" style="left:1368.0px;top:1020px;width:1px;height:23px;background:#c8cbd0"></div>
<div class="a" style="left:1457.3px;top:1020px;width:1px;height:23px;background:#c8cbd0"></div>
<div class="t" id="t87" style="left:153.30px;top:1024.59px;font-size:17.5px;color:#242424;transform:scaleX(0.8825);transform-origin:0 0;">CAD_CLI</div>
<div class="t" id="t88" style="left:251.30px;top:1020.81px;font-size:17px;color:#242424;font-weight:bold;letter-spacing:-0.050px;">CAD_ANO</div>
<div class="t" id="t89" style="left:367.50px;top:1024.59px;font-size:17.5px;color:#242424;transform:scaleX(0.8713);transform-origin:0 0;">CAD_GER</div>
<div class="t" id="t90" style="left:475.00px;top:1024.59px;font-size:17.5px;color:#242424;transform:scaleX(0.9413);transform-origin:0 0;">LAN_CON</div>
<div class="t" id="t91" style="left:585.50px;top:1024.59px;font-size:17.5px;color:#242424;transform:scaleX(0.9414);transform-origin:0 0;">ano_1</div>
<div class="t" id="t92" style="left:664.50px;top:1024.59px;font-size:17.5px;color:#242424;transform:scaleX(0.9519);transform-origin:0 0;">ano_2</div>
<div class="t" id="t93" style="left:743.50px;top:1024.59px;font-size:17.5px;color:#242424;transform:scaleX(0.9519);transform-origin:0 0;">ano_3</div>
<div class="t" id="t94" style="left:822.00px;top:1024.59px;font-size:17.5px;color:#242424;transform:scaleX(0.9646);transform-origin:0 0;">ano_4</div>
<div class="t" id="t95" style="left:901.00px;top:1024.59px;font-size:17.5px;color:#242424;transform:scaleX(0.9625);transform-origin:0 0;">ano_5</div>
<div class="t" id="t96" style="left:980.00px;top:1024.59px;font-size:17.5px;color:#242424;transform:scaleX(0.9625);transform-origin:0 0;">ano_6</div>
<div class="t" id="t97" style="left:1059.00px;top:1024.59px;font-size:17.5px;color:#242424;transform:scaleX(0.9519);transform-origin:0 0;">ano_7</div>
<div class="t" id="t98" style="left:1138.00px;top:1024.59px;font-size:17.5px;color:#242424;transform:scaleX(0.9625);transform-origin:0 0;">ano_8</div>
<div class="t" id="t99" style="left:1217.00px;top:1024.59px;font-size:17.5px;color:#242424;transform:scaleX(0.9731);transform-origin:0 0;">ano_9</div>
<div class="t" id="t100" style="left:1297.40px;top:1024.59px;font-size:17.5px;color:#242424;transform:scaleX(0.9631);transform-origin:0 0;">ano_10</div>
<div class="t" id="t101" style="left:1386.00px;top:1024.59px;font-size:17.5px;color:#242424;transform:scaleX(0.9837);transform-origin:0 0;">ano_11</div>
<div class="t" id="t102" style="left:1474.80px;top:1024.59px;font-size:17.5px;color:#242424;transform:scaleX(0.9631);transform-origin:0 0;">ano_12</div>
<svg style="left:1553px;top:1029px" width="15" height="5" viewBox="0 0 15 5"><circle cx="2" cy="2.5" r="1.8" fill="#424242"/><circle cx="7.5" cy="2.5" r="1.8" fill="#424242"/><circle cx="13" cy="2.5" r="1.8" fill="#424242"/></svg>
<svg style="left:1593px;top:1024.5px" width="15" height="15" viewBox="0 0 15 15"><path d="M7.5 0 V15 M0 7.5 H15" stroke="#242424" stroke-width="1.5"/></svg>
<svg style="left:1639px;top:1025px" width="4" height="14" viewBox="0 0 4 14"><circle cx="2" cy="2" r="1.5" fill="#424242"/><circle cx="2" cy="7" r="1.5" fill="#424242"/><circle cx="2" cy="12" r="1.5" fill="#424242"/></svg>
<div class="a" style="left:1661px;top:1021px;width:232px;height:21.5px;border-radius:11px;background:#f3f3f3"></div>
<svg style="left:1666.5px;top:1026.5px" width="9" height="11" viewBox="0 0 9 11"><path d="M0.5 5.5 L8.5 0.5 V10.5 Z" fill="#6e6e6e" stroke="#6e6e6e" stroke-linejoin="round"/></svg>
<div class="a" style="left:1682px;top:1026px;width:134px;height:11px;border-radius:5.5px;background:#616161"></div>
<svg style="left:1879px;top:1026.5px" width="9" height="11" viewBox="0 0 9 11"><path d="M8.5 5.5 L0.5 0.5 V10.5 Z" fill="#6e6e6e" stroke="#6e6e6e" stroke-linejoin="round"/></svg>
<div class="t" id="t103" style="left:14.00px;top:1060.25px;font-size:13px;color:#424242;letter-spacing:0.245px;">Pronto</div>
<svg style="left:77.5px;top:1058px" width="19" height="16" viewBox="0 0 19 16"><path d="M9 15 H1 V1 H18 V7" fill="none" stroke="#424242" stroke-width="1.2"/><path d="M1 3.5 H18" stroke="#424242" stroke-width="1.5"/><path d="M3.5 7 H8 M3.5 10 H6" stroke="#424242" stroke-width="1"/><circle cx="13" cy="11" r="4.2" fill="#f3f3f3" stroke="#424242" stroke-width="1.2"/><circle cx="13" cy="11" r="2" fill="#424242"/></svg>
<svg style="left:118px;top:1057px" width="18" height="18" viewBox="0 0 18 18"><circle cx="8" cy="2.6" r="2" fill="none" stroke="#424242" stroke-width="1.1"/><path d="M1 5.5 Q2.5 7.5 5.5 7 L5.8 10 L3.5 16.5 Q4.5 17.5 5.5 16.5 L8 11.5 M10.5 7 Q13.5 7.5 15 5.5" fill="none" stroke="#424242" stroke-width="1.1" stroke-linejoin="round"/><path d="M9.5 11 L16.5 17.5 M16.5 11 L9.5 17.5" stroke="#424242" stroke-width="1.2"/></svg>
<div class="t" id="t104" style="left:139.00px;top:1060.25px;font-size:13px;color:#242424;font-weight:bold;letter-spacing:-0.095px;">Acessibilidade: investigar</div>
<div class="a" style="left:1548px;top:1053px;width:50px;height:25.5px;background:#dddddd"></div>
<svg style="left:1564px;top:1057px" width="17" height="16" viewBox="0 0 17 16"><path d="M0.6 0.6 H16.4 V15.4 H0.6 Z M0.6 5.5 H16.4 M0.6 10.5 H16.4 M5.8 0.6 V15.4 M11.2 0.6 V15.4" fill="none" stroke="#424242" stroke-width="1.2"/></svg>
<svg style="left:1614px;top:1057px" width="17" height="16" viewBox="0 0 17 16"><path d="M0.6 0.6 H16.4 V15.4 H0.6 Z" fill="none" stroke="#424242" stroke-width="1.2"/><path d="M3.5 3.5 H13.5 V12.5 H3.5 Z M5.5 6 H11.5 M5.5 8 H11.5 M5.5 10 H11.5" fill="none" stroke="#424242" stroke-width="1"/></svg>
<svg style="left:1664px;top:1057px" width="18" height="16" viewBox="0 0 18 16"><path d="M0.6 15.4 V0.6 H17.4 V15.4 M0.6 9 H17.4 M6 0.6 V9" fill="none" stroke="#424242" stroke-width="1.2"/></svg>
<div class="a" style="left:1705px;top:1065px;width:9px;height:1.2px;background:#424242"></div>
<div class="a" style="left:1721.5px;top:1065.5px;width:124px;height:1px;background:#616161"></div>
<div class="a" style="left:1781px;top:1059px;width:6px;height:14px;background:#616161"></div>
<svg style="left:1851.5px;top:1060.5px" width="10" height="10" viewBox="0 0 10 10"><path d="M5 0 V10 M0 5 H10" stroke="#424242" stroke-width="1.2"/></svg>
<div class="t" id="t105" style="left:1877.40px;top:1060.54px;font-size:12px;color:#424242;letter-spacing:0.352px;">100%</div>
</body></html>
